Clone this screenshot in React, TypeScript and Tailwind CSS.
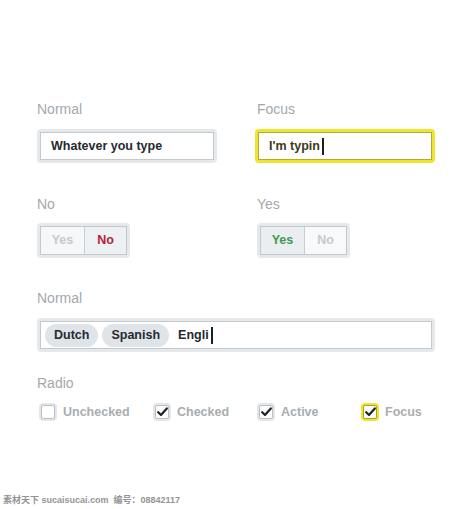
import React from "react";

const font = { fontFamily: '"Helvetica Neue", "Liberation Sans", Arial, sans-serif' };

function Check() {
  return (
    <svg width="11" height="10" viewBox="0 0 11 10" className="block">
      <path d="M1.2 5.2 L4 8 L9.8 1.4" fill="none" stroke="#1f2428" strokeWidth="2.2" strokeLinecap="round" strokeLinejoin="round" />
    </svg>
  );
}

function Box({ checked, focus }: { checked?: boolean; focus?: boolean }) {
  return (
    <div className={`flex h-[18px] w-[18px] items-center justify-center rounded-[4px] ${focus ? "bg-[#f1e42c]" : "bg-[#e3e7ea]"}`}>
      <div className={`flex h-[14px] w-[14px] items-center justify-center rounded-[2px] border bg-white ${focus ? "border-[#a89f2a]" : "border-[#b9bec3]"}`}>
        {checked && <Check />}
      </div>
    </div>
  );
}

function Cursor() {
  return <span className="ml-[2px] inline-block h-[17px] w-[2px] bg-[#1c2024]" />;
}

export default function App() {
  return (
    <div className="relative h-[509px] w-[474px] bg-white" style={font}>
      <div className="flex flex-col pl-[37px] pt-[100px]">
        {/* row 1 */}
        <div className="flex gap-[38px]">
          <div className="flex w-[180px] flex-col">
            <div className="h-[18px] text-[14px] leading-[18px] text-[#a4a8ac]">Normal</div>
            <div className="mt-[11px] rounded-[4px] bg-[#e6e9ec] p-[3px]">
              <div className="flex h-[28px] items-center border border-[#c3c8cc] bg-white pl-[10px] text-[12.5px] font-bold text-[#252a30]">
                Whatever you type
              </div>
            </div>
          </div>
          <div className="flex w-[180px] flex-col">
            <div className="h-[18px] pl-[2px] text-[14px] leading-[18px] text-[#a4a8ac]">Focus</div>
            <div className="mt-[11px] rounded-[4px] bg-[#f1e42c] p-[3px]">
              <div className="flex h-[28px] items-center border border-[#b3a935] bg-white pl-[10px] text-[12.5px] font-bold text-[#3b3a22]">
                I'm typin
                <Cursor />
              </div>
            </div>
          </div>
        </div>

        {/* row 2 */}
        <div className="mt-[32px] flex gap-[38px]">
          <div className="flex w-[180px] flex-col">
            <div className="h-[18px] text-[14px] leading-[18px] text-[#a4a8ac]">No</div>
            <div className="mt-[10px] w-[93px] rounded-[4px] bg-[#e6e9ec] p-[3px]">
              <div className="flex h-[29px] border border-[#c3c8cc] bg-white text-[12.5px] font-bold">
                <div className="flex w-[43px] items-center justify-center bg-[#f6f7f8] text-[#c6cacd]">Yes</div>
                <div className="flex flex-1 items-center justify-center border-l border-[#c9cdd1] bg-[#eef1f3] text-[#b02438]">No</div>
              </div>
            </div>
          </div>
          <div className="flex w-[180px] flex-col pl-[2px]">
            <div className="h-[18px] text-[14px] leading-[18px] text-[#a4a8ac]">Yes</div>
            <div className="mt-[10px] w-[93px] rounded-[4px] bg-[#e6e9ec] p-[3px]">
              <div className="flex h-[29px] border border-[#c3c8cc] bg-white text-[12.5px] font-bold">
                <div className="flex w-[43px] items-center justify-center bg-[#eaeef1] text-[#3f9a52]">Yes</div>
                <div className="flex flex-1 items-center justify-center border-l border-[#c9cdd1] bg-[#f8f9fa] text-[#c6cacd]">No</div>
              </div>
            </div>
          </div>
        </div>

        {/* row 3 */}
        <div className="mt-[31px] flex w-[398px] flex-col">
          <div className="h-[18px] text-[14px] leading-[18px] text-[#a4a8ac]">Normal</div>
          <div className="mt-[11px] rounded-[4px] bg-[#e6e9ec] p-[3px]">
            <div className="flex h-[28px] items-center gap-[4px] border border-[#c3c8cc] bg-white pl-[4px] text-[12.5px] font-bold text-[#252a30]">
              <span className="flex h-[23px] items-center rounded-full bg-[#dfe4e8] px-[9px]">Dutch</span>
              <span className="flex h-[23px] items-center rounded-full bg-[#dfe4e8] px-[9px]">Spanish</span>
              <span className="ml-[5px] flex items-center">
                Engli
                <Cursor />
              </span>
            </div>
          </div>
        </div>

        {/* row 4 */}
        <div className="mt-[22px] flex flex-col">
          <div className="h-[18px] text-[14px] leading-[18px] text-[#a4a8ac]">Radio</div>
          <div className="mt-[11px] flex items-center pl-[2px] text-[12.5px] font-bold text-[#a9adb1]">
            <div className="flex w-[114px] items-center gap-[6px]">
              <Box />
              <span>Unchecked</span>
            </div>
            <div className="flex w-[104px] items-center gap-[6px]">
              <Box checked />
              <span>Checked</span>
            </div>
            <div className="flex w-[104px] items-center gap-[6px]">
              <Box checked />
              <span>Active</span>
            </div>
            <div className="flex items-center gap-[6px]">
              <Box checked focus />
              <span>Focus</span>
            </div>
          </div>
        </div>
      </div>

      <div
        className="absolute bottom-[3px] left-[3px] text-[9px] font-bold leading-[12px] text-[#949494]"
        style={{ fontFamily: '"Liberation Sans", "Noto Sans CJK SC", sans-serif' }}
      >
        素材天下 sucaisucai.com&nbsp;&nbsp;编号：08842117
      </div>
    </div>
  );
}
